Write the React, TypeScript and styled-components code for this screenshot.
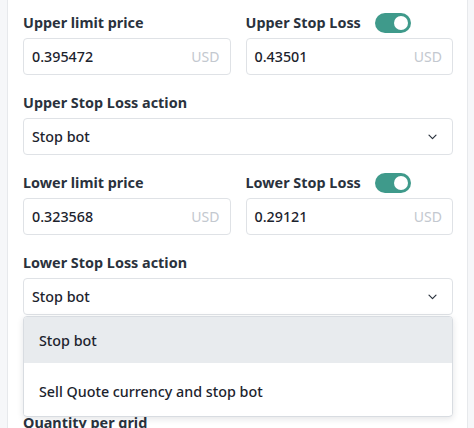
import styled, { createGlobalStyle } from 'styled-components';

const GlobalStyle = createGlobalStyle`
  html, body {
    margin: 0;
    padding: 0;
    background: #f6f7f9;
    font-family: "Noto Sans", "Open Sans", sans-serif;
    color: #262f3b;
    overflow: hidden;
  }
  * {
    box-sizing: border-box;
  }
`;

const Page = styled.div`
  height: 428px;
  overflow: hidden;
  padding: 0 6px 0 7px;
`;

const Card = styled.div`
  background: #fff;
  border: 1px solid #e7e9ec;
  border-top: none;
  border-radius: 0 0 6px 6px;
  padding: 12px 14px 20px 15px;
  display: flex;
  flex-direction: column;
  gap: 17px;
`;

const Row = styled.div`
  display: grid;
  grid-template-columns: 1fr 1fr;
  column-gap: 15px;
`;

const Field = styled.div`
  position: relative;
  display: flex;
  flex-direction: column;
  gap: 4px;
`;

const LabelLine = styled.div`
  display: flex;
  align-items: center;
  gap: 14px;
  height: 22px;
`;

const Label = styled.span`
  font-size: 14.4px;
  font-weight: 700;
  line-height: 22px;
  color: #2a323d;
`;

const Toggle = styled.span<{ $on: boolean }>`
  position: relative;
  width: 36px;
  height: 20px;
  border-radius: 10px;
  background: ${(p) => (p.$on ? '#3f9a8b' : '#cbd2d9')};

  &::after {
    content: '';
    position: absolute;
    top: 3px;
    left: ${(p) => (p.$on ? '19px' : '3px')};
    width: 14px;
    height: 14px;
    border-radius: 50%;
    background: #fff;
  }
`;

const InputBox = styled.div`
  height: 37px;
  border: 1px solid #dfe2e6;
  border-radius: 4px;
  display: flex;
  align-items: center;
  justify-content: space-between;
  padding: 0 10px 0 8px;
  background: #fff;
`;

const Value = styled.span`
  font-size: 14.3px;
  font-weight: 500;
  color: #1c232d;
`;

const Unit = styled.span`
  font-size: 14px;
  color: #c3c8cf;
`;

const SelectBox = styled(InputBox)`
  padding: 0 15px 0 8px;
`;

const Chevron = () => (
  <svg width="9" height="6" viewBox="0 0 9 6" fill="none">
    <path d="M1 1.2l3.5 3.5L8 1.2" stroke="#2a323d" strokeWidth="1.2" strokeLinecap="round" strokeLinejoin="round" />
  </svg>
);

const Menu = styled.ul`
  position: absolute;
  left: 0;
  right: 0;
  top: 64px;
  margin: 0;
  padding: 0 0 1px;
  list-style: none;
  background: #fff;
  border: 1px solid #d8dce1;
  border-radius: 4px;
  box-shadow: 0 2px 6px rgba(30, 40, 55, 0.12);
  z-index: 2;
  overflow: hidden;
`;

const Option = styled.li<{ $active?: boolean }>`
  height: ${(p) => (p.$active ? '46px' : '52px')};
  display: flex;
  align-items: center;
  padding: ${(p) => (p.$active ? '0 15px' : '4px 15px 0')};
  font-size: 14.3px;
  font-weight: 500;
  color: #1c232d;
  background: ${(p) => (p.$active ? '#e8ebee' : '#fff')};
`;

type PriceProps = {
  label?: string;
  value?: string;
  toggle?: boolean;
};

const PriceField = ({ label, value, toggle }: PriceProps) => (
  <Field>
    <LabelLine>
      {label && <Label>{label}</Label>}
      {toggle !== undefined && <Toggle $on={toggle} />}
    </LabelLine>
    <InputBox>
      {value && <Value>{value}</Value>}
      {value && <Unit>USD</Unit>}
    </InputBox>
  </Field>
);

type SelectProps = {
  label: string;
  value: string;
  options?: string[];
};

const SelectField = ({ label, value, options }: SelectProps) => (
  <Field>
    <LabelLine>
      <Label>{label}</Label>
    </LabelLine>
    <SelectBox>
      <Value>{value}</Value>
      <Chevron />
    </SelectBox>
    {options && (
      <Menu>
        {options.map((o, i) => (
          <Option key={o} $active={i === 0}>
            {o}
          </Option>
        ))}
      </Menu>
    )}
  </Field>
);

export default function App() {
  return (
    <Page>
      <GlobalStyle />
      <Card>
        <Row>
          <PriceField label="Upper limit price" value="0.395472" />
          <PriceField label="Upper Stop Loss" value="0.43501" toggle />
        </Row>
        <SelectField label="Upper Stop Loss action" value="Stop bot" />
        <Row>
          <PriceField label="Lower limit price" value="0.323568" />
          <PriceField label="Lower Stop Loss" value="0.29121" toggle />
        </Row>
        <SelectField
          label="Lower Stop Loss action"
          value="Stop bot"
          options={['Stop bot', 'Sell Quote currency and stop bot']}
        />
        {/* row hidden under the open menu */}
        <Row>
          <PriceField />
          <PriceField />
        </Row>
        <Field>
          <LabelLine>
            <Label>Quantity per grid</Label>
          </LabelLine>
          <InputBox />
        </Field>
      </Card>
    </Page>
  );
}
